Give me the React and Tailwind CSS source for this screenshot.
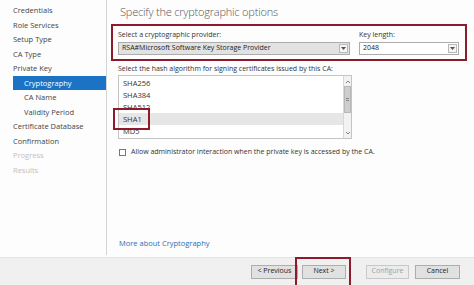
import React from 'react';

const NAV = [
  { label: 'Credentials' },
  { label: 'Role Services' },
  { label: 'Setup Type' },
  { label: 'CA Type' },
  { label: 'Private Key' },
  { label: 'Cryptography', sub: true, active: true },
  { label: 'CA Name', sub: true },
  { label: 'Validity Period', sub: true },
  { label: 'Certificate Database' },
  { label: 'Confirmation' },
  { label: 'Progress', disabled: true },
  { label: 'Results', disabled: true },
];

const HASHES = ['SHA256', 'SHA384', 'SHA512', 'SHA1', 'MD5'];

function DropArrow() {
  return (
    <div className="w-[9px] h-[9px] border border-[#b9b9b9] bg-[#f4f4f4] flex items-center justify-center">
      <svg width="5" height="3" viewBox="0 0 5 3">
        <path d="M0 0h5L2.5 3z" fill="#555" />
      </svg>
    </div>
  );
}

export default function App() {
  return (
    <div
      className="relative w-[474px] h-[285px] bg-[#fdfdfd] flex flex-col overflow-hidden text-[#3c3c3c]"
      style={{ fontFamily: '"Open Sans", "Noto Sans", sans-serif' }}
    >
      <div className="flex flex-1 min-h-0">
        {/* wizard steps */}
        <nav className="w-[107px] border-r border-[#d4d4d4] pt-[3px] pl-[13px] mb-[2px]">
          {NAV.map((item) => (
            <div
              key={item.label}
              className={`h-[14.5px] leading-[14.5px] text-[7.5px] whitespace-nowrap ${
                item.sub ? 'pl-[11px]' : 'pl-0'
              } ${
                item.active
                  ? 'bg-[#1a73c4] text-white'
                  : item.disabled
                  ? 'text-[#c0c0c0]'
                  : 'text-[#444]'
              }`}
            >
              {item.label}
            </div>
          ))}
        </nav>

        {/* page */}
        <main className="flex-1 flex flex-col pl-[4px] pr-[7px]">
          <h1 className="pl-[9px] pt-[4px] h-[21px] text-[11px] tracking-[-0.2px] font-light text-[#555] leading-[16px] whitespace-nowrap">
            Specify the cryptographic options
          </h1>

          <div className="mt-[3px] border-2 border-[#8e1b2c] h-[37px] flex pl-[5px] pr-[6px] pt-[4px] gap-[9px]">
            <div className="flex flex-col w-[232px]">
              <span className="text-[7px] leading-[9px] text-[#333]">Select a cryptographic provider:</span>
              <div className="mt-[3px] h-[13px] border border-[#acacac] bg-[#e2e2e2] flex items-center justify-between pl-[3px] pr-[1px]">
                <span className="text-[7px] text-[#222] whitespace-nowrap">RSA#Microsoft Software Key Storage Provider</span>
                <DropArrow />
              </div>
            </div>
            <div className="flex flex-col flex-1">
              <span className="text-[7px] leading-[9px] text-[#333]">Key length:</span>
              <div className="mt-[3px] h-[13px] border border-[#acacac] bg-white flex items-center justify-between pl-[3px] pr-[1px]">
                <span className="text-[7px] text-[#222]">2048</span>
                <DropArrow />
              </div>
            </div>
          </div>

          <div className="pl-[7px] mt-[3px] text-[7px] leading-[10px] text-[#333] whitespace-nowrap">
            Select the hash algorithm for signing certificates issued by this CA:
          </div>

          <div className="relative ml-[7px] mt-[1px] w-[234px] h-[64px] border border-[#c4c4c4] bg-white flex">
            <div className="flex-1 pt-[1px] overflow-hidden">
              {HASHES.map((h) => (
                <div
                  key={h}
                  className={`h-[12px] leading-[12px] pl-[4px] text-[7.5px] text-[#333] ${
                    h === 'SHA1' ? 'bg-[#e6e6e6]' : ''
                  }`}
                >
                  {h}
                </div>
              ))}
            </div>
            <div className="w-[8px] border-l border-[#d8d8d8] bg-[#f2f2f2] flex flex-col items-center">
              <svg width="6" height="8" viewBox="0 0 6 8" className="mt-[2px]">
                <path d="M1 5l2-2 2 2" stroke="#666" strokeWidth="0.8" fill="none" />
              </svg>
              <div className="w-[7px] h-[27px] bg-[#cdcdcd] border border-[#b8b8b8] flex items-center justify-center">
                <div className="w-[3px] h-[3px] border-y border-[#888]" />
              </div>
              <div className="flex-1" />
              <svg width="6" height="8" viewBox="0 0 6 8" className="mb-[1px]">
                <path d="M1 3l2 2 2-2" stroke="#666" strokeWidth="0.8" fill="none" />
              </svg>
            </div>
            {/* highlight annotation */}
            <div className="absolute left-[-6px] top-[32px] w-[37px] h-[22px] border-2 border-[#8e1b2c]" />
          </div>

          <label className="pl-[8px] mt-[8px] flex items-center gap-[5px] text-[7px] text-[#333] whitespace-nowrap">
            <span className="w-[7px] h-[7px] border border-[#777] bg-white" />
            Allow administrator interaction when the private key is accessed by the CA.
          </label>

          <div className="flex-1" />
          <a className="pl-[8px] mb-[8px] text-[7.5px] text-[#2a6db5]">More about Cryptography</a>
        </main>
      </div>

      {/* button bar */}
      <footer className="h-[28px] bg-[#f0f0f0] border-t border-[#e4e4e4] flex items-center justify-end pr-[14px] text-[7px] text-[#222]">
        <button className="w-[47px] h-[14px] border border-[#adadad] bg-[#e1e1e1]">&lt; Previous</button>
        <div className="relative ml-[4px]">
          <button className="w-[44px] h-[14px] border border-[#adadad] bg-[#e1e1e1]">Next &gt;</button>
          <div className="absolute left-[-7px] top-[-8px] w-[56px] h-[32px] border-2 border-[#8e1b2c]" />
        </div>
        <button className="ml-[20px] w-[43px] h-[14px] border border-[#c8c8c8] bg-[#ececec] text-[#a0a0a0]">Configure</button>
        <button className="ml-[6px] w-[45px] h-[14px] border border-[#adadad] bg-[#e1e1e1]">Cancel</button>
      </footer>
    </div>
  );
}
